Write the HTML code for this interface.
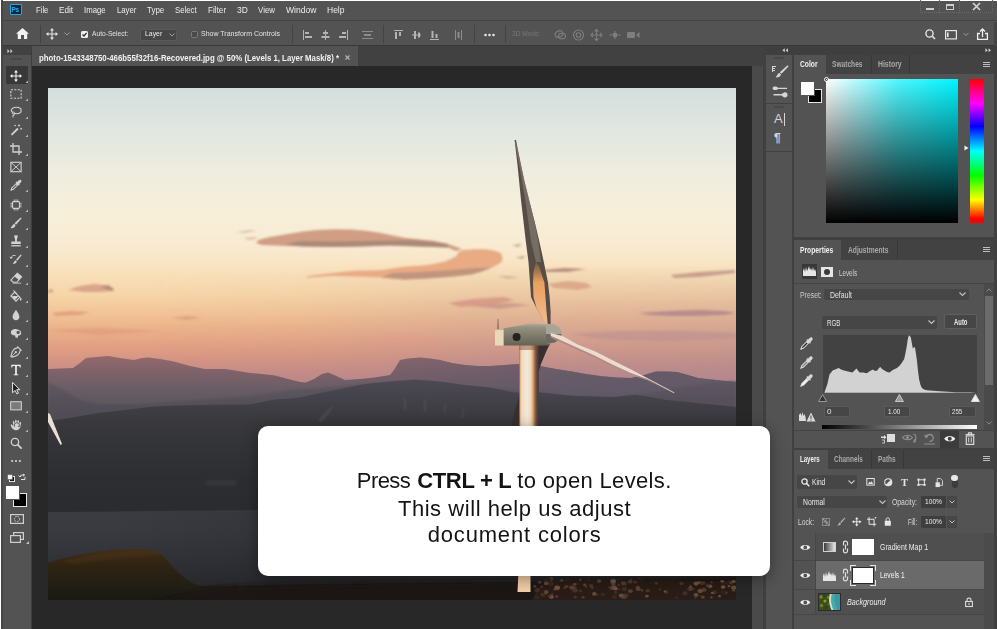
<!DOCTYPE html>
<html lang="en">
<head>
<meta charset="utf-8">
<title>Photoshop Levels tutorial</title>
<style>
*{box-sizing:border-box;margin:0;padding:0}
html,body{width:997px;height:629px;overflow:hidden;background:#535353}
body{position:relative;font-family:"Liberation Sans",sans-serif;font-size:9px;color:#ececec;line-height:1}
.a{position:absolute}
.t{position:absolute;white-space:nowrap;line-height:10px;height:10px;transform-origin:0 50%}
.dim{color:#7d7d7d}
.sep{position:absolute;width:1px;background:#444}
svg{position:absolute;overflow:visible}
.tp{font-size:22px;line-height:27px;color:#141414;white-space:nowrap}
</style>
</head>
<body>

<!-- ===== MENU BAR ===== -->
<div class="a" id="menubar" style="left:0;top:0;width:997px;height:21px;background:#535353;border-top:1px solid #fff;border-bottom:1px solid #444"></div>
<div class="a" style="left:10px;top:4px;width:12px;height:11px;background:#0a2a3e;border:1px solid #2fa3d6;border-radius:1px"></div>
<div class="t" style="left:11.500px;top:4.500px;font-size:6.500px;font-weight:bold;color:#31a8ff;letter-spacing:-.3px">Ps</div>
<div class="t" style="transform:scaleX(0.854);left:35.6px;top:5px">File</div>
<div class="t" style="transform:scaleX(0.909);left:58.9px;top:5px">Edit</div>
<div class="t" style="transform:scaleX(0.863);left:83.8px;top:5px">Image</div>
<div class="t" style="transform:scaleX(0.857);left:116.7px;top:5px">Layer</div>
<div class="t" style="transform:scaleX(0.886);left:147.2px;top:5px">Type</div>
<div class="t" style="transform:scaleX(0.863);left:175.4px;top:5px">Select</div>
<div class="t" style="transform:scaleX(0.905);left:207.9px;top:5px">Filter</div>
<div class="t" style="transform:scaleX(0.938);left:236.8px;top:5px">3D</div>
<div class="t" style="transform:scaleX(0.878);left:258.0px;top:5px">View</div>
<div class="t" style="transform:scaleX(0.950);left:285.5px;top:5px">Window</div>
<div class="t" style="transform:scaleX(0.945);left:326.7px;top:5px">Help</div>

<!-- ===== OPTIONS BAR ===== -->
<div class="a" id="optbar" style="left:2px;top:22px;width:992px;height:23px;background:#535353;border-radius:0 3px 3px 0"></div>
<div class="a" style="left:0;top:45px;width:997px;height:1px;background:#383838"></div>

<!-- ===== TAB BAR ===== -->
<div class="a" id="tabbar" style="left:0;top:46px;width:997px;height:20px;background:#414141"></div>
<div class="a" id="tab" style="left:32px;top:46px;width:326px;height:20px;background:#535353"></div>

<!-- ===== CANVAS ===== -->
<div class="a" id="canvas" style="left:32px;top:66px;width:720px;height:563px;background:#282828"></div>
<div class="a" id="vscroll" style="left:752px;top:66px;width:11px;height:563px;background:#4a4a4a"></div>

<!-- ===== LEFT TOOLBAR ===== -->
<div class="a" id="toolbar" style="left:0;top:46px;width:32px;height:583px;background:#535353;border-left:3px solid #464646;border-right:1px solid #3e3e3e"></div>
<div class="a" style="left:2px;top:46px;width:29px;height:9px;background:#424242"></div>

<div class="a" style="left:0;top:0;width:3px;height:629px;background:#464646;border-left:1px solid #fff"></div>
<div class="a" style="left:994px;top:22px;width:3px;height:24px;background:#454545"></div>
<!-- ===== RIGHT DOCK ===== -->
<div class="a" id="dock" style="left:763px;top:46px;width:234px;height:583px;background:#404040"></div>

<!-- ===== OPTIONS BAR CONTENT ===== -->
<svg style="left:16px;top:28px" width="13" height="11" viewBox="0 0 13 11"><path d="M6.500 0 L13 5.800 L11.200 5.800 L11.200 11 L8 11 L8 7 L5 7 L5 11 L1.800 11 L1.800 5.800 L0 5.800Z" fill="#f2f2f2"/></svg>
<div class="sep" style="left:40px;top:25px;height:18px;background:#434343"></div>
<svg style="left:46px;top:28px" width="12" height="12" viewBox="0 0 14 14"><path d="M7 0 L9.300 2.800 L7.600 2.800 L7.600 6.400 L11.200 6.400 L11.200 4.700 L14 7 L11.200 9.300 L11.200 7.600 L7.600 7.600 L7.600 11.200 L9.300 11.200 L7 14 L4.700 11.200 L6.400 11.200 L6.400 7.600 L2.800 7.600 L2.800 9.300 L0 7 L2.800 4.700 L2.800 6.400 L6.400 6.400 L6.400 2.800 L4.700 2.800Z" fill="#e8e8e8"/></svg>
<svg style="left:64px;top:32px" width="6" height="4" viewBox="0 0 6 4"><path d="M0.500 0.500 L3 3 L5.500 0.500" stroke="#9a9a9a" fill="none" stroke-width="1"/></svg>
<div class="a" style="left:81px;top:31px;width:7px;height:7px;background:#efefef;border-radius:1.500px"></div>
<svg style="left:81px;top:31px" width="7" height="7" viewBox="0 0 7 7"><path d="M1.500 3.500 L3 5 L5.600 1.800" stroke="#2a2a2a" fill="none" stroke-width="1.300"/></svg>
<div class="t" style="transform:scaleX(0.831);left:91.8px;top:29px;font-size:8px;color:#e2e2e2">Auto-Select:</div>
<div class="a" style="left:140px;top:29px;width:37px;height:12px;background:#464646;border:1px solid #5a5a5a;border-radius:2px"></div>
<div class="t" style="transform:scaleX(0.859);left:145.3px;top:29px;font-size:8px;color:#ececec">Layer</div>
<svg style="left:169px;top:33px" width="6" height="4" viewBox="0 0 6 4"><path d="M0.500 0.500 L3 3 L5.500 0.500" stroke="#9a9a9a" fill="none" stroke-width="1"/></svg>
<div class="a" style="left:191px;top:31px;width:7px;height:7px;border:1px solid #7a7a7a;border-radius:1.500px;background:#4a4a4a"></div>
<div class="t" style="transform:scaleX(0.875);left:201.0px;top:29px;font-size:8px;color:#e2e2e2">Show Transform Controls</div>
<div class="sep" style="left:292px;top:25px;height:18px;background:#434343"></div>
<!-- align icons -->
<svg style="left:300px;top:29px" width="200" height="12" viewBox="300 29 200 12">
 <g fill="#b4b4b4">
  <rect x="303" y="30" width="1" height="10"/><rect x="305" y="32" width="4" height="2"/><rect x="305" y="36" width="7" height="2"/>
  <rect x="325" y="30" width="1" height="10"/><rect x="323" y="32" width="5" height="2"/><rect x="321.500" y="36" width="8" height="2"/>
  <rect x="347" y="30" width="1" height="10"/><rect x="342" y="32" width="4" height="2"/><rect x="339" y="36" width="7" height="2"/>
  <rect x="394" y="30" width="9" height="1"/><rect x="395" y="32" width="2" height="7"/><rect x="399" y="32" width="2" height="4"/>
  <rect x="412" y="34.500" width="9" height="1"/><rect x="414" y="31" width="2" height="8"/><rect x="418" y="32.500" width="2" height="5"/>
  <rect x="430" y="39" width="9" height="1"/><rect x="431.500" y="31" width="2" height="7"/><rect x="435.500" y="34" width="2" height="4"/>
 </g>
 <g fill="#8c8c8c">
  <rect x="362" y="31" width="11" height="1"/><rect x="362" y="38" width="11" height="1"/><rect x="364" y="34" width="7" height="2"/>
  <rect x="455" y="30" width="1" height="10"/><rect x="461" y="30" width="1" height="10"/><rect x="457.500" y="32" width="2" height="6"/>
 </g>
 <g fill="#e4e4e4"><circle cx="485.500" cy="35" r="1.300"/><circle cx="489.500" cy="35" r="1.300"/><circle cx="493.500" cy="35" r="1.300"/></g>
</svg>
<div class="sep" style="left:383px;top:25px;height:18px;background:#434343"></div>
<div class="sep" style="left:474px;top:25px;height:18px;background:#434343"></div>
<div class="sep" style="left:505px;top:25px;height:18px;background:#434343"></div>
<div class="t" style="transform:scaleX(0.822);left:512.0px;top:29px;font-size:8px;color:#767676">3D Mode:</div>
<!-- 3d icons (dim) -->
<svg style="left:552px;top:28px" width="92" height="14" viewBox="552 28 92 14">
 <g fill="none" stroke="#7e7e7e" stroke-width="1.100">
  <ellipse cx="559" cy="34" rx="4" ry="3" transform="rotate(-25 559 34)"/><ellipse cx="562" cy="36" rx="3.500" ry="2.800"/>
  <circle cx="578.500" cy="35" r="5"/><circle cx="578.500" cy="35" r="2.300"/>
  <path d="M596.500 29.500V40.500M591 35H602"/><path d="M594.500 31.500L596.500 29.500L598.500 31.500M594.500 38.500L596.500 40.500L598.500 38.500M593 33L591 35L593 37M600 33L602 35L600 37"/>
  <path d="M609.500 35H620.500M615 31V39"/><rect x="613.500" y="33.500" width="3" height="3" fill="#7e7e7e"/>
 </g>
 <g fill="#7e7e7e"><rect x="627" y="32" width="8" height="6" rx="1"/><path d="M636 35 L639.500 32 L639.500 38Z"/></g>
</svg>
<!-- right icons -->
<svg style="left:924px;top:28px" width="70" height="14" viewBox="924 28 70 14">
 <circle cx="929.500" cy="33.500" r="3.600" fill="none" stroke="#e6e6e6" stroke-width="1.400"/><path d="M932.300 36.300 L935 39" stroke="#e6e6e6" stroke-width="1.600"/>
 <rect x="945.600" y="30.600" width="10.800" height="8.300" fill="none" stroke="#e6e6e6" stroke-width="1.200"/><rect x="947" y="32.500" width="1.600" height="4.500" fill="#e6e6e6"/>
 <path d="M963.500 33 L966 35.500 L968.500 33" fill="none" stroke="#9a9a9a" stroke-width="1"/>
 <path d="M980 33.500 L977.600 33.500 L977.600 39.400 L987.400 39.400 L987.400 33.500 L985 33.500" fill="none" stroke="#f0f0f0" stroke-width="1.300"/><path d="M982.500 37 L982.500 29.500 M980 31.500 L982.500 29 L985 31.500" fill="none" stroke="#f0f0f0" stroke-width="1.300"/>
</svg>
<!-- window controls -->
<div class="a" style="left:920px;top:0;width:73px;height:13px;border:1px dotted #6a6a6a;border-top:none"></div>
<div class="a" style="left:939px;top:0;width:1px;height:13px;border-left:1px dotted #6a6a6a"></div>
<div class="a" style="left:959px;top:0;width:1px;height:13px;border-left:1px dotted #6a6a6a"></div>
<div class="a" style="left:926px;top:8px;width:8px;height:2px;background:#cfcfcf"></div>
<div class="a" style="left:946px;top:4px;width:8px;height:6px;border:1px solid #cfcfcf;border-top-width:2px"></div>
<svg style="left:972px;top:2px" width="9" height="9" viewBox="0 0 9 9"><path d="M1 1 L8 8 M8 1 L1 8" stroke="#d6d6d6" stroke-width="1.600"/></svg>
<!-- doc tab -->
<div class="t" style="transform:scaleX(0.918);left:38.5px;top:53px;font-size:8.500px;font-weight:bold;color:#f2f2f2">photo-1543348750-466b55f32f16-Recovered.jpg @ 50% (Levels 1, Layer Mask/8) *</div>
<svg style="left:345px;top:55px" width="5" height="5" viewBox="0 0 5 5"><path d="M0.500 0.500 L4.500 4.500 M4.500 0.500 L0.500 4.500" stroke="#b4b4b4" stroke-width="1.100"/></svg>

<!-- ===== TOOLS ===== -->
<svg style="left:6.500px;top:48.500px" width="6" height="4.300" viewBox="0 0 7 5"><path d="M0.500 0 L0.500 5 L3 2.500Z M4 0 L4 5 L6.500 2.500Z" fill="#cfcfcf"/></svg>
<div class="a" style="left:11px;top:58px;width:11px;height:2px;background:#484848"></div>
<div class="a" style="left:6px;top:66px;width:22px;height:18px;background:#383838;border-radius:1px"></div>
<svg style="left:10px;top:69.5px" width="12" height="12" viewBox="0 0 14 14"><path d="M7 0 L9.300 2.800 L7.600 2.800 L7.600 6.400 L11.200 6.400 L11.200 4.700 L14 7 L11.200 9.300 L11.200 7.600 L7.600 7.600 L7.600 11.200 L9.300 11.200 L7 14 L4.700 11.200 L6.400 11.200 L6.400 7.600 L2.800 7.600 L2.800 9.300 L0 7 L2.800 4.700 L2.800 6.400 L6.400 6.400 L6.400 2.800 L4.700 2.800Z" fill="#f4f4f4"/></svg>
<svg style="left:25px;top:79.5px" width="3" height="3" viewBox="0 0 3 3"><path d="M3 0.500 L3 3 L0.500 3Z" fill="#b8b8b8"/></svg>
<svg style="left:10px;top:87.5px" width="12" height="12" viewBox="0 0 14 14"><rect x="1" y="2" width="12" height="10" fill="none" stroke="#d2d2d2" stroke-width="1.300" stroke-dasharray="2.400 1.600"/></svg>
<svg style="left:25px;top:97.5px" width="3" height="3" viewBox="0 0 3 3"><path d="M3 0.500 L3 3 L0.500 3Z" fill="#b8b8b8"/></svg>
<svg style="left:10px;top:106px" width="12" height="12" viewBox="0 0 14 14"><path d="M7.500 1.500 C11 1.500 13 3.200 13 5.200 C13 7.500 10.500 9 7.500 9 C6.500 9 5.500 8.800 4.800 8.500 M3.200 7.600 C2 6.800 1.500 6 1.500 5.200 C1.500 3.200 4 1.500 7.500 1.500" fill="none" stroke="#d2d2d2" stroke-width="1.300"/><path d="M4.500 8 C5.500 9 5 10.500 3.800 11 C3 11.300 3 12.500 4 13.300" fill="none" stroke="#d2d2d2" stroke-width="1.200"/><circle cx="4" cy="8.200" r="1.300" fill="none" stroke="#d2d2d2" stroke-width="1"/></svg>
<svg style="left:25px;top:116px" width="3" height="3" viewBox="0 0 3 3"><path d="M3 0.500 L3 3 L0.500 3Z" fill="#b8b8b8"/></svg>
<svg style="left:10px;top:124px" width="12" height="12" viewBox="0 0 14 14"><path d="M1 12 L8.500 4.500 L10 6 L2.500 13.500Z" fill="#d2d2d2"/><path d="M10.500 0.500 L10.500 3 M9.200 1.800 L11.800 1.800 M13 4.500 L13 6.500 M12 5.500 L14 5.500 M6 1 L6 2.600 M5.200 1.800 L6.800 1.800" stroke="#d2d2d2" stroke-width="1"/></svg>
<svg style="left:25px;top:134px" width="3" height="3" viewBox="0 0 3 3"><path d="M3 0.500 L3 3 L0.500 3Z" fill="#b8b8b8"/></svg>
<svg style="left:10px;top:142.5px" width="12" height="12" viewBox="0 0 14 14"><path d="M3.500 0 L3.500 10.500 L14 10.500 M0 3.500 L10.500 3.500 L10.500 14" fill="none" stroke="#d2d2d2" stroke-width="1.500"/></svg>
<svg style="left:25px;top:152.5px" width="3" height="3" viewBox="0 0 3 3"><path d="M3 0.500 L3 3 L0.500 3Z" fill="#b8b8b8"/></svg>
<svg style="left:10px;top:161px" width="12" height="12" viewBox="0 0 14 14"><rect x="1" y="1.500" width="12" height="11" fill="none" stroke="#d2d2d2" stroke-width="1.300"/><path d="M1 1.500 L13 12.500 M13 1.500 L1 12.500" stroke="#d2d2d2" stroke-width="1.100"/></svg>
<svg style="left:10px;top:179px" width="12" height="12" viewBox="0 0 14 14"><path d="M12.700 1.300 C13.600 2.200 13.400 3.300 12.500 4.200 L10.800 5.900 L11.500 6.600 L10.400 7.700 L9.700 7 L4 12.700 L2.200 13.200 L1.200 14 L0.300 13.100 L1 12.100 L1.500 10.300 L7.200 4.600 L6.500 3.900 L7.600 2.800 L8.300 3.500 L10 1.800 C10.900 0.900 11.800 0.400 12.700 1.300Z" fill="#d2d2d2"/><path d="M2.600 10.800 L7 6.400 L7.800 7.200 L3.400 11.600 L2.400 11.800Z" fill="#535353"/></svg>
<svg style="left:25px;top:189px" width="3" height="3" viewBox="0 0 3 3"><path d="M3 0.500 L3 3 L0.500 3Z" fill="#b8b8b8"/></svg>
<svg style="left:10px;top:198.5px" width="12" height="12" viewBox="0 0 14 14"><rect x="3" y="3" width="8" height="8" rx="1" fill="none" stroke="#d2d2d2" stroke-width="1.300"/><path d="M5 0.500V3M7 0.500V3M9 0.500V3M5 11V13.500M7 11V13.500M9 11V13.500M0.500 5H3M0.500 7H3M0.500 9H3M11 5H13.500M11 7H13.500M11 9H13.500" stroke="#d2d2d2" stroke-width="1"/></svg>
<svg style="left:25px;top:208.5px" width="3" height="3" viewBox="0 0 3 3"><path d="M3 0.500 L3 3 L0.500 3Z" fill="#b8b8b8"/></svg>
<svg style="left:10px;top:216.5px" width="12" height="12" viewBox="0 0 14 14"><path d="M12.500 0.500 L13.600 1.600 L7 9 L5.300 7.400Z" fill="#d2d2d2"/><path d="M4.800 8 L6.400 9.600 C6 12 3.500 13.500 0.500 13 C2.500 11.800 2.500 9 4.800 8Z" fill="#d2d2d2"/></svg>
<svg style="left:25px;top:226.5px" width="3" height="3" viewBox="0 0 3 3"><path d="M3 0.500 L3 3 L0.500 3Z" fill="#b8b8b8"/></svg>
<svg style="left:10px;top:235px" width="12" height="12" viewBox="0 0 14 14"><path d="M5 1 C5 0 9 0 9 1 C9.500 2.500 8 4 8 6 L8 7.500 L12.500 7.500 L12.500 10.500 L1.500 10.500 L1.500 7.500 L6 7.500 L6 6 C6 4 4.500 2.500 5 1Z" fill="#d2d2d2"/><rect x="1.500" y="11.800" width="11" height="1.500" fill="#d2d2d2"/></svg>
<svg style="left:25px;top:245px" width="3" height="3" viewBox="0 0 3 3"><path d="M3 0.500 L3 3 L0.500 3Z" fill="#b8b8b8"/></svg>
<svg style="left:10px;top:253.5px" width="12" height="12" viewBox="0 0 14 14"><path d="M12.500 0.500 L13.600 1.600 L8.500 8 L7 6.600Z" fill="#d2d2d2"/><path d="M6.500 7.200 L8 8.700 C7.500 10.800 5.500 12 3 11.600 C4.600 10.600 4.600 8 6.500 7.200Z" fill="#d2d2d2"/><path d="M1 5 C1.500 2.500 4 1 6.500 1.800 M1 5 L0 3.200 M1 5 L3 4.200" fill="none" stroke="#d2d2d2" stroke-width="1.100"/></svg>
<svg style="left:25px;top:263.5px" width="3" height="3" viewBox="0 0 3 3"><path d="M3 0.500 L3 3 L0.500 3Z" fill="#b8b8b8"/></svg>
<svg style="left:10px;top:271.5px" width="12" height="12" viewBox="0 0 14 14"><path d="M8.500 1.500 L13.500 5.500 L8 12 L4 12 L1 9.500Z" fill="none" stroke="#d2d2d2" stroke-width="1.300"/><path d="M8.500 1.500 L13.500 5.500 L10.300 9.200 L5.300 5.200Z" fill="#d2d2d2"/><path d="M3 13 L13 13" stroke="#d2d2d2" stroke-width="1"/></svg>
<svg style="left:25px;top:281.5px" width="3" height="3" viewBox="0 0 3 3"><path d="M3 0.500 L3 3 L0.500 3Z" fill="#b8b8b8"/></svg>
<svg style="left:10px;top:290px" width="12" height="12" viewBox="0 0 14 14"><path d="M5.500 2.500 L11.500 8.500 L7 13 L1 7Z" fill="none" stroke="#d2d2d2" stroke-width="1.300"/><path d="M2.500 7 L9.800 7 L7 10.800 L5 11Z" fill="#d2d2d2"/><path d="M4 0.500 L8 4.500" stroke="#d2d2d2" stroke-width="1.200"/><path d="M12.500 8.500 C13.500 10 14 11 13.200 12 C12.500 12.800 11.300 12.200 11.500 11 C11.600 10.200 12 9.500 12.500 8.500Z" fill="#d2d2d2"/></svg>
<svg style="left:25px;top:300px" width="3" height="3" viewBox="0 0 3 3"><path d="M3 0.500 L3 3 L0.500 3Z" fill="#b8b8b8"/></svg>
<svg style="left:10px;top:308.5px" width="12" height="12" viewBox="0 0 14 14"><path d="M7 1 C8.500 4 11 6.500 11 9.200 C11 11.500 9.200 13 7 13 C4.800 13 3 11.500 3 9.200 C3 6.500 5.500 4 7 1Z" fill="#d2d2d2"/></svg>
<svg style="left:25px;top:318.5px" width="3" height="3" viewBox="0 0 3 3"><path d="M3 0.500 L3 3 L0.500 3Z" fill="#b8b8b8"/></svg>
<svg style="left:10px;top:326.5px" width="12" height="12" viewBox="0 0 14 14"><path d="M1 6.500 C1 3.500 4 2 7.500 2.500 C11 3 13.500 5 13 7.500 C12.700 9.300 11 10 9.500 9.800 L9 12.500 L6.500 12.500 L6 10 C3 10 1 9 1 6.500Z" fill="#d2d2d2"/><circle cx="9.500" cy="6.300" r="1.900" fill="#535353"/></svg>
<svg style="left:25px;top:336.5px" width="3" height="3" viewBox="0 0 3 3"><path d="M3 0.500 L3 3 L0.500 3Z" fill="#b8b8b8"/></svg>
<svg style="left:10px;top:345.5px" width="12" height="12" viewBox="0 0 14 14"><path d="M9 1 L13 5 L11.500 6 C11.500 9 9 11.500 2 13 L1 12 C2.500 5 5 2.500 8 2.500Z" fill="none" stroke="#d2d2d2" stroke-width="1.300"/><circle cx="6.800" cy="7.200" r="1.300" fill="#d2d2d2"/><path d="M1.500 12.500 L6 8" stroke="#d2d2d2" stroke-width="1"/></svg>
<svg style="left:25px;top:355.5px" width="3" height="3" viewBox="0 0 3 3"><path d="M3 0.500 L3 3 L0.500 3Z" fill="#b8b8b8"/></svg>
<svg style="left:10px;top:363.5px" width="12" height="12" viewBox="0 0 14 14"><path d="M1.500 1 L12.500 1 L12.500 4 L11.500 4 C11.300 2.800 10.800 2.300 9.500 2.300 L8 2.300 L8 11.300 C8 12 8.500 12.200 9.800 12.200 L9.800 13 L4.200 13 L4.200 12.200 C5.500 12.200 6 12 6 11.300 L6 2.300 L4.500 2.300 C3.200 2.300 2.700 2.800 2.500 4 L1.500 4Z" fill="#efefef"/></svg>
<svg style="left:25px;top:373.5px" width="3" height="3" viewBox="0 0 3 3"><path d="M3 0.500 L3 3 L0.500 3Z" fill="#b8b8b8"/></svg>
<svg style="left:10px;top:382px" width="12" height="12" viewBox="0 0 14 14"><path d="M3 0.500 L11.500 9 L7.800 9 L9.800 13 L8 13.800 L6 9.800 L3 12.500Z" fill="#1e1e1e" stroke="#f0f0f0" stroke-width="1.100"/></svg>
<svg style="left:25px;top:392px" width="3" height="3" viewBox="0 0 3 3"><path d="M3 0.500 L3 3 L0.500 3Z" fill="#b8b8b8"/></svg>
<svg style="left:10px;top:400px" width="12" height="12" viewBox="0 0 14 14"><rect x="0.800" y="2" width="12.400" height="9.500" fill="#7a7a7a" stroke="#d2d2d2" stroke-width="1.200"/></svg>
<svg style="left:25px;top:410px" width="3" height="3" viewBox="0 0 3 3"><path d="M3 0.500 L3 3 L0.500 3Z" fill="#b8b8b8"/></svg>
<svg style="left:10px;top:418.5px" width="12" height="12" viewBox="0 0 14 14"><path d="M3 7.500 C2 6 0.800 5.800 0.800 7 C0.800 8.500 3 12.500 6 13 C9.500 13.500 12 11.500 12.200 8.500 C12.400 6.500 13.500 4 12.500 3.500 C11.500 3 11 5 10.500 6 C10.500 4 10.800 1.500 9.600 1.300 C8.500 1.200 8.600 4 8.200 5.500 C8 3.500 8 0.800 6.800 0.800 C5.600 0.800 6 4 5.800 5.800 C5.200 4.200 4.800 2 3.800 2.300 C2.700 2.600 3.800 6 4 8Z" fill="#d2d2d2"/><path d="M5.500 9 A3 3 0 1 1 10.500 9" fill="none" stroke="#535353" stroke-width="1.100"/><path d="M10.800 9.600 L10.800 7.600 L9 8.800Z" fill="#535353"/></svg>
<svg style="left:25px;top:428.5px" width="3" height="3" viewBox="0 0 3 3"><path d="M3 0.500 L3 3 L0.500 3Z" fill="#b8b8b8"/></svg>
<svg style="left:10px;top:437px" width="12" height="12" viewBox="0 0 14 14"><circle cx="5.800" cy="5.800" r="4.300" fill="none" stroke="#d2d2d2" stroke-width="1.500"/><path d="M9 9 L13 13" stroke="#d2d2d2" stroke-width="2" stroke-linecap="round"/></svg>
<svg style="left:10px;top:455px" width="12" height="12" viewBox="0 0 14 14"><circle cx="2.500" cy="7" r="1.300" fill="#d2d2d2"/><circle cx="7" cy="7" r="1.300" fill="#d2d2d2"/><circle cx="11.500" cy="7" r="1.300" fill="#d2d2d2"/></svg>
<svg style="left:7px;top:474px" width="8" height="8" viewBox="0 0 8 8"><rect x="2.500" y="2.500" width="5" height="5" fill="#111" stroke="#e0e0e0" stroke-width="1"/><rect x="0.500" y="0.500" width="5" height="5" fill="#f0f0f0" stroke="#535353" stroke-width=".6"/></svg>
<svg style="left:18px;top:474px" width="9" height="8" viewBox="0 0 9 8"><path d="M2 3 C2 1.500 3 1 5 1 L6.500 1 M2 3 L0.500 1.500 M2 3 L3.500 1.500 M6.500 1 L5 0 M6.500 1 L5 2.300" stroke="#e0e0e0" fill="none" stroke-width="1"/><path d="M3 5.500 L7 5.500 L7 3" stroke="#e0e0e0" fill="none" stroke-width="1"/></svg>
<div class="a" style="left:13px;top:493px;width:14px;height:14px;background:#000;border:1px solid #e6e6e6"></div>
<div class="a" style="left:5px;top:485px;width:15px;height:15px;background:#fff;border:1px solid #535353"></div>
<svg style="left:10px;top:514px" width="14" height="10" viewBox="0 0 14 10"><rect x="0.600" y="0.600" width="12.800" height="8.800" fill="none" stroke="#cfcfcf" stroke-width="1.200"/><circle cx="7" cy="5" r="2.600" fill="none" stroke="#cfcfcf" stroke-width="1" stroke-dasharray="1.500 1"/></svg>
<svg style="left:10px;top:532px" width="14" height="11" viewBox="0 0 14 11"><rect x="3.600" y="0.600" width="9.800" height="6.800" fill="none" stroke="#cfcfcf" stroke-width="1.200"/><rect x="0.600" y="3.600" width="9.800" height="6.800" fill="#535353" stroke="#cfcfcf" stroke-width="1.200"/></svg>
<svg style="left:26px;top:541px" width="3" height="3" viewBox="0 0 3 3"><path d="M3 0 L3 3 L0 3Z" fill="#c4c4c4"/></svg>

<!-- ===== PHOTO ===== -->
<svg id="photo" class="a" style="left:48px;top:88px;overflow:hidden" width="688" height="512" viewBox="48 88 688 512">
<defs>
  <linearGradient id="sky" x1="0" y1="88" x2="0" y2="388" gradientUnits="userSpaceOnUse">
    <stop offset="0" stop-color="#d4dedd"/>
    <stop offset=".14" stop-color="#e1e7e1"/>
    <stop offset=".29" stop-color="#efede0"/>
    <stop offset=".43" stop-color="#f7efd9"/>
    <stop offset=".54" stop-color="#f8ead0"/>
    <stop offset=".62" stop-color="#f8e0ba"/>
    <stop offset=".69" stop-color="#f6d5a8"/>
    <stop offset=".75" stop-color="#f2c497"/>
    <stop offset=".80" stop-color="#ecb38b"/>
    <stop offset=".85" stop-color="#e4a384"/>
    <stop offset=".90" stop-color="#d79683"/>
    <stop offset=".95" stop-color="#c68c86"/>
    <stop offset="1" stop-color="#b88488"/>
  </linearGradient>
  <linearGradient id="pinkR" x1="0" y1="265" x2="0" y2="395" gradientUnits="userSpaceOnUse">
    <stop offset="0" stop-color="#cda598" stop-opacity="0"/>
    <stop offset=".27" stop-color="#cda598" stop-opacity=".6"/>
    <stop offset=".5" stop-color="#c79e96" stop-opacity="1"/>
    <stop offset=".77" stop-color="#b08a90"/>
    <stop offset="1" stop-color="#a8848e"/>
  </linearGradient>
  <linearGradient id="pinkMask" x1="150" y1="0" x2="736" y2="0" gradientUnits="userSpaceOnUse">
    <stop offset="0" stop-color="#000"/>
    <stop offset=".25" stop-color="#1c1c1c"/>
    <stop offset=".56" stop-color="#737373"/>
    <stop offset="1" stop-color="#a0a0a0"/>
  </linearGradient>
  <mask id="mPink" maskUnits="userSpaceOnUse" x="48" y="88" width="688" height="512"><rect x="48" y="88" width="688" height="512" fill="url(#pinkMask)"/></mask>
  <linearGradient id="far" x1="0" y1="355" x2="0" y2="408" gradientUnits="userSpaceOnUse">
    <stop offset="0" stop-color="#946a6e"/>
    <stop offset=".3" stop-color="#80626a"/>
    <stop offset=".65" stop-color="#695d65"/>
    <stop offset="1" stop-color="#59565c"/>
  </linearGradient>
  <linearGradient id="farTint" x1="300" y1="0" x2="600" y2="0" gradientUnits="userSpaceOnUse">
    <stop offset="0" stop-color="#5f5868" stop-opacity="0"/>
    <stop offset="1" stop-color="#5f5868" stop-opacity=".75"/>
  </linearGradient>
  <linearGradient id="mid" x1="0" y1="380" x2="0" y2="420" gradientUnits="userSpaceOnUse">
    <stop offset="0" stop-color="#5e5661"/>
    <stop offset="1" stop-color="#4c4a52"/>
  </linearGradient>
  <linearGradient id="dark" x1="0" y1="380" x2="0" y2="520" gradientUnits="userSpaceOnUse">
    <stop offset="0" stop-color="#4c4952"/>
    <stop offset=".15" stop-color="#424148"/>
    <stop offset=".3" stop-color="#38383d"/>
    <stop offset=".5" stop-color="#323337"/>
    <stop offset=".7" stop-color="#2d2e32"/>
    <stop offset="1" stop-color="#2a2b2e"/>
  </linearGradient>
  <linearGradient id="lake" x1="0" y1="509" x2="0" y2="590" gradientUnits="userSpaceOnUse">
    <stop offset="0" stop-color="#34363a"/>
    <stop offset=".06" stop-color="#3b3d43"/>
    <stop offset=".3" stop-color="#383a40"/>
    <stop offset=".65" stop-color="#303237"/>
    <stop offset="1" stop-color="#27282b"/>
  </linearGradient>
  <linearGradient id="fg" x1="0" y1="548" x2="0" y2="600" gradientUnits="userSpaceOnUse">
    <stop offset="0" stop-color="#402c16"/>
    <stop offset=".35" stop-color="#2e2312"/>
    <stop offset=".7" stop-color="#221f14"/>
    <stop offset="1" stop-color="#191813"/>
  </linearGradient>
  <linearGradient id="tower" x1="519.500" y1="0" x2="539" y2="0" gradientUnits="userSpaceOnUse">
    <stop offset="0" stop-color="#dca070"/>
    <stop offset=".12" stop-color="#f0dcc2"/>
    <stop offset=".4" stop-color="#f4e8d8"/>
    <stop offset=".58" stop-color="#f0d9bc"/>
    <stop offset=".7" stop-color="#dca06c"/>
    <stop offset=".8" stop-color="#8e6248"/>
    <stop offset=".9" stop-color="#58423a"/>
    <stop offset="1" stop-color="#483a36"/>
  </linearGradient>
  <linearGradient id="bladeLit" x1="0" y1="264" x2="0" y2="324" gradientUnits="userSpaceOnUse">
    <stop offset="0" stop-color="#d48c54" stop-opacity=".3"/>
    <stop offset=".3" stop-color="#e8a060"/>
    <stop offset=".7" stop-color="#efb07a"/>
    <stop offset="1" stop-color="#f0bc8c"/>
  </linearGradient>
  <linearGradient id="nac" x1="0" y1="323" x2="0" y2="346" gradientUnits="userSpaceOnUse">
    <stop offset="0" stop-color="#b4af9e"/>
    <stop offset=".2" stop-color="#94907f"/>
    <stop offset=".6" stop-color="#7c7869"/>
    <stop offset="1" stop-color="#646055"/>
  </linearGradient>
  <linearGradient id="lakeR" x1="100" y1="0" x2="330" y2="0" gradientUnits="userSpaceOnUse"><stop offset="0" stop-color="#202124" stop-opacity="0"/><stop offset="1" stop-color="#202124" stop-opacity=".3"/></linearGradient>
  <filter id="b05"><feGaussianBlur stdDeviation=".5"/></filter>
  <filter id="b1"><feGaussianBlur stdDeviation="1"/></filter>
  <filter id="b2"><feGaussianBlur stdDeviation="2"/></filter>
  <filter id="b3"><feGaussianBlur stdDeviation="3.5"/></filter>
  <filter id="b6"><feGaussianBlur stdDeviation="7"/></filter>
</defs>

<rect x="48" y="88" width="688" height="512" fill="url(#sky)"/>
<rect x="48" y="88" width="688" height="320" fill="url(#pinkR)" mask="url(#mPink)"/>

<!-- clouds -->
<g filter="url(#b1)">
  <path d="M256 243 L259 239.700 270 237 288 234 303 231.500 317 230 335 229.300 352 229.500 368 231 381 233 393 235.500 404.500 237.700 420 239.500 433.600 241 448 244 462 249 456 251 448 247.600 434 247 419 246.400 404 246 390 245.500 375 246 361 246.400 346 247 332 247 317 246.800 303 246.400 288 246 273.600 245.500 262 245Z" fill="#d09e84"/>
  <path d="M300 241 L332 241.500 361 241 390 240.500 410 240 433.600 241.500 448 244 448 247.600 419 246.400 390 245.500 361 246.400 332 247 303 246.400 285 244.500Z" fill="#ab8978"/>
  <path d="M244 238 L254 237 258 239 248 240Z M236 232 L250 230 256 231 244 233Z" fill="#d8b096" opacity=".7"/>
  <path d="M500.500 252.800 L494 250.500 486 249.300 474 249.300 462.700 250 458 252.500 456.900 255.700 451 259 445.200 261.500 436 263.500 427.800 265 416 266 404.500 266.800 392 268.600 381.300 270.300 368 270.600 355 270.800 343 272 331.800 273.200 320 274.600 308.500 276 305.600 277.800 318 277 331.800 276 346 276.300 360.900 276.700 381.300 277.500 393 278.700 404.500 279.600 416 279.200 427.800 278.400 440 277.600 451 276.700 461 275.800 471.400 274.600 482 271.500 491.800 267.400 498 264.500 502 261.500 502.500 257Z" fill="#e8ab84"/>
  <path d="M392 273 L420 272 451 270 474 268 491.800 267.400 482 271.500 471.400 274.600 451 276.700 427.800 278.400 404.500 279.600 381.300 277.500Z" fill="#bf957e"/>
  <path d="M498 276 L512 276.500 518 278 506 278.500Z" fill="#c9a58e" opacity=".8"/>
  <path d="M68 290 L80 286 94 284 104 285 112 288 114 291 100 292 84 292Z" fill="#dba58a"/>
  <path d="M100 287 L108 285 114 289 112 291Z" fill="#b58d7c"/>
  <path d="M52 313 L70 311 90 312 80 315 56 316Z" fill="#e0a380"/>
  <path d="M170 318 L188 316 202 318 186 320Z" fill="#e0a380"/>
  <path d="M48 290 L52 289 54 292 48 293Z" fill="#d7a48c"/>
</g>
<g filter="url(#b1)">
  <path d="M544 270 L564 268 586 269 568 272 546 272Z" fill="#b8917e"/>
  <path d="M548 284 L568 281 586 283 592 287 578 290 554 288Z" fill="#dba98d"/>
  <path d="M512 245 L522 244 518 247Z" fill="#c7a48c"/>
  <path d="M516 257 L526 256 522 259Z" fill="#c7a48c"/>
  <path d="M671 275 L700 272 735 270 735 273 700 277 674 278Z" fill="#c7a08c"/>
  <path d="M639 313 L670 311 700 310 724 311 736 313 724 315 700 316 670 316 650 315Z" fill="#b88c8e"/>
  <path d="M448 303 L474 299 504 297 514 300 494 305 460 307Z" fill="#d99c88"/>
  <path d="M470 306 L510 303 530 305 500 309Z" fill="#c48f86" opacity=".7"/>
  <path d="M570 334 L620 331 690 331 736 333 736 339 660 341 600 339Z" fill="#b48a90" opacity=".45"/>
  <path d="M360 338 L400 336 450 338 420 342 380 342Z" fill="#e49a8a" opacity=".55"/>
  <path d="M48 330 L100 328 160 331 100 335Z" fill="#dc9478" opacity=".5"/>
</g>

<!-- far mountains -->
<path d="M48 369 L73 368 L80 363 L86 358 L96 357 L108 356 L120 358 L134 360 L142 358 L149 357.5 L160 359 L174 361.5 L190 366 L205 369 L225 369 L238 371 L250 373 L262 374 L275 375.5 L288 379 L300 382 L306 382.5 L314 379 L322 374 L328 372.5 L334 375 L345 380 L360 379 L375 377.5 L390 375 L394 370 L400 360 L408 358.5 L420 357.5 L430 358.5 L440 360 L452 363 L465 365 L478 366 L490 366 L505 365 L518 364 L530 365 L540 366 L556 369 L572 371.5 L586 374 L600 376 L616 377.5 L631 378 L644 375 L656 371.5 L667 371.5 L677 372 L688 375 L698 378 L716 380 L736 382 L736 440 L48 440Z" fill="url(#far)"/>
<path d="M48 369 L73 368 L80 363 L86 358 L96 357 L108 356 L120 358 L134 360 L142 358 L149 357.5 L160 359 L174 361.5 L190 366 L205 369 L225 369 L238 371 L250 373 L262 374 L275 375.5 L288 379 L300 382 L306 382.5 L314 379 L322 374 L328 372.5 L334 375 L345 380 L360 379 L375 377.5 L390 375 L394 370 L400 360 L408 358.5 L420 357.5 L430 358.5 L440 360 L452 363 L465 365 L478 366 L490 366 L505 365 L518 364 L530 365 L540 366 L556 369 L572 371.5 L586 374 L600 376 L616 377.5 L631 378 L644 375 L656 371.5 L667 371.5 L677 372 L688 375 L698 378 L716 380 L736 382 L736 440 L48 440Z" fill="url(#farTint)"/>
<!-- mid haze layer -->
<path d="M48 383 L60 388 L70 394 L81 400 L100 404 L140 404 L200 400 L250 396 L290 390 L320 388 L360 384 L400 382 L540 392 L572 396 L614 397 L635 395 L650 393 L667 390 L690 386 L710 383 L736 381 L736 440 L48 440Z" fill="url(#mid)" opacity=".8" filter="url(#b1)"/>
<!-- dark ridge -->
<path d="M48 421 L70 418 L98 413 L125 410 L149 407 L175 405.5 L200 405 L225 404.5 L250 404.5 L262 402 L275 399.5 L290 398.5 L300 397.5 L315 394 L340 389 L365 384 L390 381.5 L415 379.6 L440 381.4 L465 385 L490 387.6 L515 392.5 L540 392.6 L572 395.8 L595 396.5 L614 397 L635 394.8 L650 397 L667 400 L698 403 L736 407 L736 520 L48 520Z" fill="url(#dark)"/>

<!-- pale streaks on dark hills -->
<g fill="#5b5a60" opacity=".5" filter="url(#b1)">
  <path d="M318 420 L330 408 334 406 322 422Z"/>
  <path d="M404 398 l2 0 0 12 -2 0z M424 400 l2 0 0 12 -2 0z M444 404 l1.5 0 0 10 -1.5 0z M462 408 l1.500 0 0 10 -1.500 0z"/>
  <rect x="206" y="480" width="30" height="6" opacity=".4"/>
</g>
<!-- small left turbine blade -->
<path d="M48 413 L50 414 62 444 60.500 445 48 422Z" fill="#e8ded4"/>
<!-- lake -->
<path d="M48 512 L110 511.500 190 510.500 280 510 736 509 736 600 48 600Z" fill="url(#lake)"/>
<rect x="48" y="512" width="688" height="80" fill="url(#lakeR)"/>
<!-- foreground hill -->
<path d="M48 562.7 L60 559 L74.5 556 L86 553.5 L98.8 551.7 L110 550.3 L120.8 549.5 L136 549.3 L151.7 550 L158 552.5 L162.7 556 L168 561.5 L173.8 568 L181 575 L189 581.5 L196 584.5 L202.5 586 L260 585 L330 584 L430 583 L520 582 L620 580 L736 577 L736 600 L48 600Z" fill="url(#fg)"/>
<path d="M60 561 L96 553 130 550 150 550 164 554 150 556 110 559 76 564Z" fill="#54371a" opacity=".35" filter="url(#b1)"/>
<path d="M150 604 L185 596 205 589 228 586 348 583 548 581 736 579 736 604Z" fill="#1a1915" opacity=".9" filter="url(#b2)"/>
<!-- foreground rocks right lit -->
<g filter="url(#b05)">
<path d="M532 600 L536 592 542 585 552 580 566 581 580 578 600 579 630 581 670 580 710 582 736 580 736 600Z" fill="#2a1f19"/>
<g opacity=".5" filter="url(#b05)"><ellipse cx="599.1" cy="581.0" rx="2.2" ry="1.7" fill="#8a6248"/><ellipse cx="699.1" cy="582.6" rx="2.1" ry="1.6" fill="#a07858"/><ellipse cx="541.5" cy="586.7" rx="1.2" ry="0.9" fill="#8a6248"/><ellipse cx="647.7" cy="590.6" rx="2.1" ry="1.6" fill="#6b4a36"/><ellipse cx="730.2" cy="581.8" rx="2.6" ry="2.0" fill="#3a2a1e"/><ellipse cx="618.2" cy="588.8" rx="2.1" ry="1.6" fill="#4a3426"/><ellipse cx="554.7" cy="589.4" rx="1.4" ry="1.1" fill="#8a6248"/><ellipse cx="546.0" cy="582.1" rx="2.3" ry="1.8" fill="#5a4030"/><ellipse cx="690.2" cy="588.9" rx="2.7" ry="2.1" fill="#7a5640"/><ellipse cx="594.3" cy="593.9" rx="2.3" ry="1.8" fill="#a07858"/><ellipse cx="550.5" cy="584.0" rx="1.9" ry="1.5" fill="#7a5640"/><ellipse cx="731.0" cy="583.0" rx="1.8" ry="1.4" fill="#7a5640"/><ellipse cx="564.5" cy="587.8" rx="1.1" ry="0.9" fill="#8a6248"/><ellipse cx="710.0" cy="586.3" rx="2.3" ry="1.8" fill="#b08a68"/><ellipse cx="702.8" cy="597.1" rx="1.9" ry="1.5" fill="#8a6248"/><ellipse cx="546.2" cy="592.0" rx="2.2" ry="1.7" fill="#b08a68"/><ellipse cx="591.2" cy="585.7" rx="2.3" ry="1.7" fill="#6b4a36"/><ellipse cx="723.1" cy="587.0" rx="2.2" ry="1.7" fill="#b08a68"/><ellipse cx="545.8" cy="593.4" rx="1.3" ry="1.0" fill="#a07858"/><ellipse cx="614.0" cy="596.3" rx="1.9" ry="1.5" fill="#4a3426"/><ellipse cx="624.3" cy="589.0" rx="2.6" ry="2.0" fill="#5a4030"/><ellipse cx="707.7" cy="585.7" rx="1.8" ry="1.4" fill="#7a5640"/><ellipse cx="580.4" cy="579.7" rx="1.3" ry="1.0" fill="#a07858"/><ellipse cx="536.4" cy="594.6" rx="1.4" ry="1.1" fill="#3a2a1e"/><ellipse cx="534.8" cy="586.4" rx="1.7" ry="1.3" fill="#7a5640"/><ellipse cx="725.6" cy="592.7" rx="2.0" ry="1.5" fill="#6b4a36"/><ellipse cx="625.8" cy="595.4" rx="2.8" ry="2.1" fill="#5a4030"/><ellipse cx="614.0" cy="585.9" rx="1.9" ry="1.5" fill="#5a4030"/><ellipse cx="546.5" cy="579.3" rx="1.4" ry="1.1" fill="#4a3426"/><ellipse cx="556.1" cy="590.0" rx="1.2" ry="0.9" fill="#4a3426"/><ellipse cx="641.9" cy="590.3" rx="1.2" ry="0.9" fill="#a07858"/><ellipse cx="584.7" cy="584.9" rx="1.7" ry="1.3" fill="#8a6248"/><ellipse cx="557.2" cy="587.8" rx="2.8" ry="2.2" fill="#b08a68"/><ellipse cx="631.3" cy="579.7" rx="1.2" ry="0.9" fill="#7a5640"/><ellipse cx="575.2" cy="597.0" rx="1.7" ry="1.3" fill="#6b4a36"/><ellipse cx="703.9" cy="589.8" rx="2.7" ry="2.1" fill="#7a5640"/><ellipse cx="690.6" cy="586.6" rx="1.4" ry="1.1" fill="#a07858"/><ellipse cx="696.0" cy="594.9" rx="2.4" ry="1.8" fill="#a07858"/><ellipse cx="574.2" cy="587.9" rx="2.4" ry="1.8" fill="#6b4a36"/><ellipse cx="692.8" cy="589.0" rx="1.4" ry="1.1" fill="#7a5640"/><ellipse cx="623.9" cy="596.7" rx="2.8" ry="2.2" fill="#7a5640"/><ellipse cx="550.2" cy="580.0" rx="1.9" ry="1.5" fill="#7a5640"/><ellipse cx="575.1" cy="590.5" rx="2.7" ry="2.1" fill="#6b4a36"/><ellipse cx="630.4" cy="591.1" rx="2.5" ry="1.9" fill="#8a6248"/><ellipse cx="701.8" cy="583.0" rx="1.7" ry="1.3" fill="#a07858"/><ellipse cx="630.1" cy="581.6" rx="2.5" ry="1.9" fill="#7a5640"/><ellipse cx="551.4" cy="596.9" rx="2.4" ry="1.8" fill="#b08a68"/><ellipse cx="614.7" cy="596.9" rx="2.4" ry="1.8" fill="#4a3426"/><ellipse cx="733.6" cy="581.5" rx="2.1" ry="1.6" fill="#b08a68"/><ellipse cx="696.1" cy="583.5" rx="2.5" ry="2.0" fill="#b08a68"/><ellipse cx="536.9" cy="597.4" rx="2.2" ry="1.7" fill="#4a3426"/><ellipse cx="621.2" cy="595.4" rx="2.5" ry="2.0" fill="#a07858"/><ellipse cx="539.6" cy="582.3" rx="2.0" ry="1.5" fill="#7a5640"/><ellipse cx="586.1" cy="586.4" rx="1.3" ry="1.0" fill="#7a5640"/><ellipse cx="714.4" cy="592.3" rx="2.5" ry="1.9" fill="#5a4030"/><ellipse cx="700.3" cy="595.9" rx="1.3" ry="1.0" fill="#4a3426"/><ellipse cx="639.2" cy="578.4" rx="1.8" ry="1.4" fill="#4a3426"/><ellipse cx="656.3" cy="583.5" rx="1.3" ry="1.0" fill="#8a6248"/><ellipse cx="638.2" cy="589.1" rx="2.5" ry="1.9" fill="#8a6248"/><ellipse cx="711.5" cy="582.0" rx="1.4" ry="1.1" fill="#6b4a36"/><ellipse cx="646.9" cy="596.2" rx="1.8" ry="1.4" fill="#a07858"/><ellipse cx="723.2" cy="592.9" rx="2.6" ry="2.0" fill="#3a2a1e"/><ellipse cx="719.5" cy="596.2" rx="1.4" ry="1.1" fill="#b08a68"/><ellipse cx="561.6" cy="580.4" rx="1.8" ry="1.4" fill="#8a6248"/><ellipse cx="576.8" cy="584.1" rx="1.3" ry="1.0" fill="#4a3426"/><ellipse cx="722.8" cy="591.9" rx="1.7" ry="1.3" fill="#3a2a1e"/><ellipse cx="711.4" cy="597.4" rx="1.4" ry="1.1" fill="#8a6248"/><ellipse cx="614.0" cy="587.7" rx="2.8" ry="2.2" fill="#a07858"/><ellipse cx="566.5" cy="586.6" rx="2.0" ry="1.5" fill="#7a5640"/><ellipse cx="618.7" cy="585.1" rx="1.2" ry="0.9" fill="#7a5640"/><ellipse cx="537.9" cy="589.1" rx="1.8" ry="1.4" fill="#6b4a36"/><ellipse cx="611.3" cy="588.3" rx="1.6" ry="1.2" fill="#8a6248"/><ellipse cx="556.7" cy="596.4" rx="1.5" ry="1.1" fill="#8a6248"/><ellipse cx="550.9" cy="583.4" rx="2.7" ry="2.1" fill="#4a3426"/><ellipse cx="588.4" cy="580.6" rx="1.8" ry="1.4" fill="#3a2a1e"/><ellipse cx="615.6" cy="588.7" rx="2.0" ry="1.5" fill="#b08a68"/><ellipse cx="545.6" cy="591.8" rx="1.8" ry="1.4" fill="#8a6248"/><ellipse cx="588.1" cy="578.3" rx="1.2" ry="0.9" fill="#3a2a1e"/><ellipse cx="550.8" cy="595.1" rx="1.2" ry="0.9" fill="#8a6248"/><ellipse cx="625.2" cy="584.8" rx="2.0" ry="1.6" fill="#3a2a1e"/><ellipse cx="676.6" cy="597.5" rx="1.5" ry="1.2" fill="#4a3426"/><ellipse cx="574.6" cy="584.2" rx="1.6" ry="1.2" fill="#a07858"/><ellipse cx="592.3" cy="588.0" rx="1.4" ry="1.0" fill="#7a5640"/><ellipse cx="695.5" cy="597.9" rx="1.1" ry="0.9" fill="#6b4a36"/><ellipse cx="572.1" cy="587.5" rx="2.7" ry="2.1" fill="#8a6248"/><ellipse cx="666.3" cy="592.2" rx="2.0" ry="1.6" fill="#5a4030"/><ellipse cx="729.0" cy="586.2" rx="1.4" ry="1.1" fill="#a07858"/><ellipse cx="602.9" cy="594.6" rx="2.3" ry="1.8" fill="#4a3426"/><ellipse cx="615.3" cy="585.0" rx="1.1" ry="0.9" fill="#4a3426"/><ellipse cx="536.9" cy="590.5" rx="2.6" ry="2.0" fill="#5a4030"/><ellipse cx="566.8" cy="579.7" rx="2.6" ry="2.0" fill="#3a2a1e"/><ellipse cx="654.4" cy="581.8" rx="1.4" ry="1.1" fill="#3a2a1e"/><ellipse cx="623.6" cy="583.3" rx="2.8" ry="2.1" fill="#7a5640"/><ellipse cx="583.1" cy="597.3" rx="1.6" ry="1.2" fill="#7a5640"/><ellipse cx="570.8" cy="584.7" rx="1.2" ry="0.9" fill="#3a2a1e"/><ellipse cx="635.1" cy="582.0" rx="2.0" ry="1.5" fill="#6b4a36"/><ellipse cx="552.3" cy="594.3" rx="1.3" ry="1.0" fill="#6b4a36"/><ellipse cx="613.2" cy="584.0" rx="2.2" ry="1.7" fill="#8a6248"/><ellipse cx="684.9" cy="593.2" rx="2.6" ry="2.0" fill="#5a4030"/><ellipse cx="687.6" cy="589.4" rx="1.6" ry="1.2" fill="#4a3426"/><ellipse cx="542.8" cy="594.7" rx="2.7" ry="2.0" fill="#5a4030"/><ellipse cx="681.5" cy="583.4" rx="2.0" ry="1.5" fill="#6b4a36"/><ellipse cx="700.1" cy="590.9" rx="2.7" ry="2.0" fill="#a07858"/><ellipse cx="551.1" cy="578.8" rx="2.2" ry="1.7" fill="#8a6248"/><ellipse cx="609.7" cy="587.0" rx="1.1" ry="0.9" fill="#6b4a36"/><ellipse cx="659.9" cy="589.3" rx="1.0" ry="0.8" fill="#8a6248"/><ellipse cx="641.6" cy="579.3" rx="2.4" ry="1.8" fill="#3a2a1e"/><ellipse cx="696.7" cy="595.4" rx="1.5" ry="1.1" fill="#a07858"/><ellipse cx="580.4" cy="591.0" rx="1.9" ry="1.4" fill="#5a4030"/><ellipse cx="549.4" cy="596.2" rx="1.6" ry="1.2" fill="#6b4a36"/><ellipse cx="658.0" cy="582.3" rx="1.3" ry="1.0" fill="#3a2a1e"/><ellipse cx="665.0" cy="591.6" rx="1.3" ry="1.0" fill="#b08a68"/><ellipse cx="546.2" cy="583.4" rx="2.3" ry="1.7" fill="#a07858"/><ellipse cx="637.8" cy="587.3" rx="1.9" ry="1.5" fill="#8a6248"/><ellipse cx="733.7" cy="590.3" rx="1.6" ry="1.2" fill="#8a6248"/><ellipse cx="722.2" cy="581.3" rx="1.9" ry="1.4" fill="#b08a68"/><ellipse cx="733.8" cy="587.6" rx="2.7" ry="2.1" fill="#a07858"/><ellipse cx="549.0" cy="579.8" rx="2.4" ry="1.8" fill="#3a2a1e"/><ellipse cx="725.5" cy="583.3" rx="2.5" ry="1.9" fill="#3a2a1e"/><ellipse cx="712.3" cy="593.0" rx="1.5" ry="1.1" fill="#b08a68"/><ellipse cx="613.2" cy="581.2" rx="2.8" ry="2.1" fill="#b08a68"/><ellipse cx="615.5" cy="592.5" rx="1.8" ry="1.4" fill="#5a4030"/><ellipse cx="597.5" cy="594.8" rx="1.0" ry="0.8" fill="#7a5640"/><ellipse cx="702.7" cy="583.0" rx="2.7" ry="2.1" fill="#6b4a36"/></g>
</g>

<!-- turbine -->
<path d="M539 343 L550 343.5 L546 352 L541 364 L538.5 372 L538.5 394 L519.6 394 L515 410 L511 426 L519.6 426 L519.6 344Z" fill="#3a2f30"/>
<rect x="519.500" y="344" width="19" height="90" fill="url(#tower)"/>
<rect x="519.500" y="344" width="19" height="6" fill="#7a4a2c" opacity=".45"/>
<path d="M518.500 570 L530.500 570 530.500 592 517.500 592Z" fill="#f3cfa6"/>
<!-- nacelle -->
<path d="M503.500 328.500 L530 323.500 549 324.500 550 345.500 503.500 345.500Z" fill="url(#nac)"/>
<path d="M495 330.300 L503.500 330 503.500 345.600 495 345.600Z" fill="#e8d9ba"/>
<circle cx="516.600" cy="337" r="4" fill="#24231f"/>
<path d="M497.500 319 L498.500 319 499 329 497 329Z" fill="#8a8074"/>
<!-- hub -->
<path d="M546 323.500 L553 324 559 327 562 332 561 338 556 342 549 343.500 546 343Z" fill="#a8a496"/>
<path d="M546 334 L561.500 334 560 339 555 342.500 549 343.500 546 343Z" fill="#6e6a60"/>
<!-- blade up -->
<path d="M514.6 140 L516 140 L519.5 158 L524 180 L529 200 L534.5 221 L539.3 241.3 L543.8 262 L548 282.6 L549.6 297 L550.6 311.6 L550.6 324 L548.6 324 L542.4 317.8 L536.2 307.4 L531 297 L530 282.6 L528.5 262 L525.8 241.3 L521 200 L517.5 165Z" fill="#574d45"/>
<path d="M515 143 L516 142 L520 160 L525 183 L530 203 L535 224 L538.5 243 L541 262 L536 262 L531 241 L526 205 L521 175Z" fill="#7d746a" opacity=".8" filter="url(#b05)"/>
<path d="M536 262 L539 266 L541.5 274 L544.4 282.6 L545.5 297 L546.4 310 L547.5 322 L546.5 324 L542.4 317.8 L536.5 308 L533.5 297 L533 282.6 L533.5 272Z" fill="url(#bladeLit)" filter="url(#b05)"/>
<!-- blade right -->
<path d="M550.7 333 L562.3 336 L577.7 344.5 L595.3 351.5 L613 360.4 L630.6 369.2 L650 379.5 L674.4 392.6 L674.2 393.2 L648 379.6 L630.6 373 L613 365 L595.3 356 L577.7 348 L560 340 L550.7 336Z" fill="#eedbd0"/>
<path d="M550.7 336 L560 340 L577.7 348 L595.3 356 L613 365 L630.6 373 L648 379.6 L674.2 393.2 L648 380.6 L630.6 374.6 L613 366.8 L595.3 358 L577.7 350 L560 342 L550.7 337.5Z" fill="#b08e86"/>
</svg>

<!-- ===== RIGHT DOCK: icon strip ===== -->
<div class="a" style="left:765px;top:46px;width:232px;height:9px;background:#3f3f3f"></div>
<svg style="left:782px;top:48px" width="6.400" height="4.500" viewBox="0 0 8 5"><path d="M3.500 0 L3.500 5 L0.500 2.500Z M7.500 0 L7.500 5 L4.500 2.500Z" fill="#cfcfcf"/></svg>
<svg style="left:985px;top:48px" width="6.400" height="4.500" viewBox="0 0 8 5"><path d="M0.500 0 L0.500 5 L3.500 2.500Z M4.500 0 L4.500 5 L7.500 2.500Z" fill="#cfcfcf"/></svg>
<div class="a" style="left:766px;top:55px;width:26px;height:48px;background:#535353"></div>
<div class="a" style="left:766px;top:104px;width:26px;height:47px;background:#535353"></div>
<div class="a" style="left:766px;top:152px;width:26px;height:477px;background:#535353"></div>
<div class="a" style="left:774px;top:57px;width:10px;height:2px;background:#484848"></div>
<div class="a" style="left:774px;top:106px;width:10px;height:2px;background:#484848"></div>
<!-- brush settings icon -->
<svg style="left:771px;top:64px" width="18" height="15" viewBox="0 0 18 15">
  <path d="M1 2.500h4M1 4.500h3M1 6.500h3M1.500 2v6" stroke="#d6d6d6" stroke-width="1" fill="none"/>
  <path d="M16.500 1.200 L17.600 2.300 L10.500 9.800 L8.800 8.300Z" fill="#d6d6d6"/>
  <path d="M8.300 8.800 L10 10.400 C9.500 12.500 7 13.800 4.500 13.300 C6.200 12.300 6.300 9.700 8.300 8.800Z" fill="#d6d6d6"/>
</svg>
<!-- brushes icon -->
<svg style="left:772px;top:85px" width="16" height="14" viewBox="0 0 16 14">
  <path d="M0.500 3.200 C0.500 1.800 2 1.400 3.500 1.500 C5 1.600 5.500 2.500 6 2.700 L15 2.700 L15 3.900 L6 3.900 C5.500 4.100 5 5 3.500 5 C2 5 0.500 4.500 0.500 3.200Z" fill="#d6d6d6"/>
  <path d="M15.500 9.800 C15.500 7.500 13.500 7 12 7.500 C10.800 7.900 10.300 8.800 9.700 9.100 L1.500 9.100 L1.500 10.400 L9.700 10.400 C10.300 10.700 10.800 12 12.500 12.500 C14 12.900 15.500 12 15.500 9.800Z" fill="#d6d6d6"/>
</svg>
<!-- character A| -->
<div class="t" style="left:774px;top:112px;font-size:13px;line-height:14px;height:14px;color:#d6d6d6">A</div>
<div class="a" style="left:784px;top:113px;width:1px;height:13px;background:#d6d6d6"></div>
<!-- paragraph -->
<div class="t" style="left:774px;top:131px;font-size:12px;line-height:14px;height:14px;color:#d6d6d6;font-weight:bold">¶</div>

<!-- ===== COLOR PANEL ===== -->
<div class="a" style="left:794px;top:55px;width:200px;height:182px;background:#535353"></div>
<div class="a" style="left:794px;top:55px;width:200px;height:19px;background:#424242"></div>
<div class="a" style="left:794px;top:55px;width:32px;height:19px;background:#535353"></div>
<div class="sep" style="left:871px;top:55px;height:19px;background:#383838"></div>
<div class="sep" style="left:909px;top:55px;height:19px;background:#383838"></div>
<div class="t" style="transform:scaleX(0.788);left:800.4px;top:59px;font-weight:bold;color:#f0f0f0;font-size:8.500px">Color</div>
<div class="t" style="transform:scaleX(0.778);left:831.9px;top:59px;font-weight:bold;color:#a9a9a9;font-size:8.500px">Swatches</div>
<div class="t" style="transform:scaleX(0.806);left:877.7px;top:59px;font-weight:bold;color:#a9a9a9;font-size:8.500px">History</div>
<div class="a" style="left:983px;top:62px;width:7px;height:1px;background:#bdbdbd;box-shadow:0 2px 0 #bdbdbd,0 4px 0 #bdbdbd"></div>
<!-- fg/bg swatches -->
<div class="a" style="left:808px;top:89px;width:14px;height:14px;background:#000;border:1px solid #e6e6e6"></div>
<div class="a" style="left:800px;top:81px;width:15px;height:15px;background:#fff;border:1px solid #535353"></div>
<!-- color field -->
<div class="a" style="left:826px;top:79px;width:132px;height:144px;background:linear-gradient(to bottom,rgba(0,0,0,0),#000),linear-gradient(to right,#fff 0%,#4cf8ff 55%,#00f5ff 100%)"></div>
<div class="a" style="left:823.500px;top:76.500px;width:5px;height:5px;border:1px solid #fff;border-radius:50%;box-shadow:0 0 0 .7px #333 inset"></div>
<!-- hue strip -->
<div class="a" style="left:970px;top:79px;width:14px;height:144px;background:linear-gradient(to bottom,#f00 0%,#f0f 17%,#00f 33%,#0ff 50%,#0f0 67%,#ff0 84%,#f00 97%,#f00 100%)"></div>
<svg style="left:963.500px;top:144.500px" width="5" height="6" viewBox="0 0 6 7"><path d="M0.500 0.500 L5.500 3.500 L0.500 6.500Z" fill="#f2f2f2"/></svg>

<!-- ===== PROPERTIES PANEL ===== -->
<div class="a" style="left:794px;top:240px;width:200px;height:208px;background:#535353"></div>
<div class="a" style="left:794px;top:240px;width:200px;height:20px;background:#424242"></div>
<div class="a" style="left:794px;top:240px;width:47px;height:20px;background:#535353"></div>
<div class="sep" style="left:897px;top:240px;height:20px;background:#383838"></div>
<div class="t" style="transform:scaleX(0.790);left:800.4px;top:245px;font-weight:bold;color:#f0f0f0;font-size:8.500px">Properties</div>
<div class="t" style="transform:scaleX(0.787);left:848.1px;top:245px;font-weight:bold;color:#a9a9a9;font-size:8.500px">Adjustments</div>
<div class="a" style="left:983px;top:247px;width:7px;height:1px;background:#bdbdbd;box-shadow:0 2px 0 #bdbdbd,0 4px 0 #bdbdbd"></div>
<!-- icon row -->
<div class="a" style="left:802px;top:264px;width:15px;height:15px;background:#383838"></div>
<svg style="left:803px;top:266px" width="13" height="10" viewBox="0 0 13 10"><path d="M0 10 L0 5 L1 2 L2 6 L3 1 L4 5 L5 3 L6 0 L7 4 L8 2 L9 5 L10 1 L11 5 L12 3 L13 6 L13 10Z" fill="#e6e6e6"/></svg>
<div class="a" style="left:821px;top:267px;width:12px;height:10px;background:#e6e6e6"></div>
<div class="a" style="left:824px;top:269px;width:6px;height:6px;background:#3a3a3a;border-radius:50%"></div>
<div class="t" style="transform:scaleX(0.736);left:838.8px;top:268px;font-size:8.500px;color:#d0d0d0">Levels</div>
<div class="a" style="left:794px;top:283px;width:200px;height:1px;background:#444"></div>
<!-- preset -->
<div class="t" style="transform:scaleX(0.809);left:800.4px;top:290px;font-size:8.500px;color:#c8c8c8">Preset:</div>
<div class="a" style="left:824px;top:289px;width:145px;height:11px;background:#464646;border-radius:2px"></div>
<div class="t" style="transform:scaleX(0.813);left:830.0px;top:290px;font-size:8.500px;color:#e4e4e4">Default</div>
<svg style="left:959px;top:292px" width="7" height="5" viewBox="0 0 7 5"><path d="M0.500 0.500 L3.500 3.500 L6.500 0.500" stroke="#c0c0c0" fill="none" stroke-width="1.200"/></svg>
<!-- scrollbar -->
<div class="a" style="left:984px;top:284px;width:10px;height:146px;background:#4a4a4a"></div>
<div class="a" style="left:985px;top:296px;width:8px;height:89px;background:#6b6b6b"></div>
<svg style="left:986px;top:288px" width="6" height="4" viewBox="0 0 6 4"><path d="M0.500 3.500 L3 0.800 L5.500 3.500" stroke="#8a8a8a" fill="none" stroke-width="1"/></svg>
<svg style="left:986px;top:421px" width="6" height="4" viewBox="0 0 6 4"><path d="M0.500 0.500 L3 3.200 L5.500 0.500" stroke="#8a8a8a" fill="none" stroke-width="1"/></svg>
<!-- channel + auto -->
<div class="a" style="left:822px;top:316px;width:115px;height:13px;background:#464646;border-radius:2px"></div>
<div class="t" style="transform:scaleX(0.733);left:827.0px;top:318px;font-size:8.500px;color:#e4e4e4">RGB</div>
<svg style="left:928px;top:320px" width="7" height="5" viewBox="0 0 7 5"><path d="M0.500 0.500 L3.500 3.500 L6.500 0.500" stroke="#c0c0c0" fill="none" stroke-width="1.200"/></svg>
<div class="a" style="left:944px;top:314px;width:33px;height:15px;background:#464646;border:1px solid #5e5e5e;border-radius:2px"></div>
<div class="t" style="transform:scaleX(0.697);left:954px;top:317px;font-size:8.500px;color:#ececec;font-weight:bold">Auto</div>
<!-- eyedroppers -->
<svg style="left:800px;top:337px" width="13" height="13" viewBox="0 0 13 13"><path id="eyd" d="M12.200 0.800 C13 1.600 12.800 2.600 12 3.400 L10.300 5.100 L10.900 5.700 L9.900 6.700 L9.300 6.100 L3.600 11.800 L1.800 12.300 L0.800 13 L0 12.200 L0.700 11.200 L1.200 9.400 L6.900 3.700 L6.300 3.100 L7.300 2.100 L7.900 2.700 L9.600 1 C10.400 0.200 11.400 0 12.200 0.800Z" fill="#d8d8d8"/><path d="M2.200 9.900 L6.600 5.500 L7.500 6.400 L3.100 10.800 L1.900 11.100Z" fill="#222"/></svg>
<svg style="left:800px;top:356px" width="13" height="13" viewBox="0 0 13 13"><use href="#eyd"/><path d="M2.200 9.900 L6.600 5.500 L7.500 6.400 L3.100 10.800 L1.900 11.100Z" fill="#808080"/></svg>
<svg style="left:800px;top:374px" width="13" height="13" viewBox="0 0 13 13"><use href="#eyd"/><path d="M2.200 9.900 L6.600 5.500 L7.500 6.400 L3.100 10.800 L1.900 11.100Z" fill="#fff"/></svg>
<!-- histogram -->
<div class="a" style="left:823px;top:335px;width:154px;height:58px;background:#424242"></div>
<svg style="left:0;top:0" width="997" height="629" viewBox="0 0 997 629"><path d="M824.300 392.700 L827.400 384 829.500 374.600 832.600 370.500 835 369.500 838.800 368 841 369.500 844 370.500 848 371.500 852.300 372.600 855 370 856.400 368.400 858 370.500 859.600 372.600 863 372.500 866.800 373.200 870 371 873 369.500 875 371 877.200 370.500 879 368 880.300 367 882 369 884.500 370.500 887 372 889.700 372.600 892 370.500 893.800 369.500 897 368 900 365.300 902 362.500 904.200 359 905.500 353 906.700 346.600 907.800 339 908.800 335.200 909.800 336 910.800 337.300 911.800 343 912.900 348.700 914 347 915 347.600 916 354 917 361 918 371 919.200 379.800 920.500 385 921.900 388 924 389.500 927 390.200 933 390.800 939.500 391.300 948 391.800 956 392.300 970.700 392.300 976 392.700Z" fill="#d2d2d2"/></svg>
<!-- sliders -->
<svg style="left:818px;top:394px" width="164" height="9" viewBox="818 394 164 9">
  <path d="M822.600 394.500 L826.600 401.500 L818.600 401.500Z" fill="#333" stroke="#9a9a9a" stroke-width="1"/>
  <path d="M899.400 394.500 L903.400 401.500 L895.400 401.500Z" fill="#9a9a9a" stroke="#c6c6c6" stroke-width="1"/>
  <path d="M975.400 394.500 L979.400 401.500 L971.400 401.500Z" fill="#f2f2f2" stroke="#dcdcdc" stroke-width="1"/>
</svg>
<!-- input boxes -->
<div class="a" style="left:824px;top:406px;width:26px;height:11px;background:#464646;border:1px solid #5a5a5a;border-radius:1px"></div>
<div class="t" style="left:827px;top:407px;font-size:8px;color:#e8e8e8">0</div>
<div class="a" style="left:884px;top:406px;width:26px;height:11px;background:#464646;border:1px solid #5a5a5a;border-radius:1px"></div>
<div class="t" style="transform:scaleX(0.796);left:887.6px;top:407px;font-size:8px;color:#e8e8e8">1.00</div>
<div class="a" style="left:949px;top:406px;width:27px;height:11px;background:#464646;border:1px solid #5a5a5a;border-radius:1px"></div>
<div class="t" style="transform:scaleX(0.771);left:952.0px;top:407px;font-size:8px;color:#e8e8e8">255</div>
<!-- clip warning icon -->
<svg style="left:799px;top:412px" width="17" height="10" viewBox="0 0 17 10"><path d="M0 9 L0 3 L1.500 1 L2.500 4 L3.500 0 L4.500 4 L5.500 2 L6.500 5 L7 9Z" fill="#dcdcdc"/><path d="M12 0.500 L16.500 9.500 L7.500 9.500Z" fill="#dcdcdc"/><rect x="11.500" y="3.500" width="1" height="3.500" fill="#444"/><rect x="11.500" y="7.700" width="1" height="1" fill="#444"/></svg>
<!-- output gradient -->
<div class="a" style="left:822px;top:425px;width:155px;height:4px;background:linear-gradient(to right,#000,#fff)"></div>
<!-- bottom toolbar -->
<div class="a" style="left:794px;top:430px;width:200px;height:1px;background:#444"></div>
<div class="a" style="left:940px;top:431px;width:19px;height:17px;background:#3c3c3c"></div>
<svg style="left:881px;top:433px" width="14" height="11" viewBox="0 0 14 11"><rect x="6" y="1" width="8" height="8" fill="#dedede"/><path d="M0 3.500 L3 3.500 L3 2 L5.500 4.300 L3 6.600 L3 5 L0 5Z" fill="#dedede"/><path d="M1 7 L3.500 7 L3.500 10 M1 10 L3.500 10" stroke="#dedede" fill="none" stroke-width=".8"/></svg>
<svg style="left:902px;top:433px" width="16" height="11" viewBox="0 0 16 11"><path d="M0.500 4.500 C2.500 1.500 8.500 1.500 10.500 4.500 C8.500 7.500 2.500 7.500 0.500 4.500Z" fill="none" stroke="#8e8e8e" stroke-width="1.200"/><circle cx="5.500" cy="4.500" r="1.600" fill="#8e8e8e"/><path d="M11.500 1 C14.500 2 15 6 12 8.500 L12.500 6.500 M12 8.500 L14 8.800" stroke="#8e8e8e" fill="none" stroke-width="1.200"/></svg>
<svg style="left:923px;top:432px" width="13" height="13" viewBox="0 0 13 13"><path d="M3 5 C4 2 8.500 1.500 10 4.500 C11 7 9.500 9.500 6.500 9.500" stroke="#8e8e8e" fill="none" stroke-width="1.300"/><path d="M0.800 3 L3.200 6.800 L5.600 3.600Z" fill="#8e8e8e"/><path d="M1 12 L12 12" stroke="#8e8e8e" stroke-width="1"/></svg>
<svg style="left:944px;top:435px" width="11.500" height="7.400" viewBox="0 0 14 9"><path id="eyeP" d="M0.300 4.500 C2.800 0.300 11.200 0.300 13.700 4.500 C11.200 8.700 2.800 8.700 0.300 4.500Z" fill="#f0f0f0"/><circle cx="7" cy="4.500" r="2.400" fill="#3c3c3c"/></svg>
<svg style="left:965px;top:432px" width="10" height="13" viewBox="0 0 10 13"><path d="M0.500 2.500 L9.500 2.500 M3.500 2.500 L3.500 0.800 L6.500 0.800 L6.500 2.500" stroke="#d8d8d8" fill="none" stroke-width="1.200"/><path d="M1.300 3.800 L8.700 3.800 L8.700 12.300 L1.300 12.300Z" fill="none" stroke="#d8d8d8" stroke-width="1.200"/><path d="M3.700 5.500 L3.700 10.500 M6.300 5.500 L6.300 10.500" stroke="#d8d8d8" stroke-width="1"/></svg>

<!-- ===== LAYERS PANEL ===== -->
<div class="a" style="left:794px;top:450px;width:200px;height:179px;background:#535353"></div>
<div class="a" style="left:794px;top:450px;width:200px;height:19px;background:#424242"></div>
<div class="a" style="left:794px;top:450px;width:34px;height:19px;background:#535353"></div>
<div class="sep" style="left:871px;top:450px;height:19px;background:#383838"></div>
<div class="sep" style="left:903px;top:450px;height:19px;background:#383838"></div>
<div class="t" style="transform:scaleX(0.718);left:800.4px;top:454px;font-weight:bold;color:#f0f0f0;font-size:8.500px">Layers</div>
<div class="t" style="transform:scaleX(0.755);left:834.2px;top:454px;font-weight:bold;color:#a9a9a9;font-size:8.500px">Channels</div>
<div class="t" style="transform:scaleX(0.764);left:878.2px;top:454px;font-weight:bold;color:#a9a9a9;font-size:8.500px">Paths</div>
<div class="a" style="left:983px;top:456px;width:7px;height:1px;background:#bdbdbd;box-shadow:0 2px 0 #bdbdbd,0 4px 0 #bdbdbd"></div>
<!-- filter row -->
<div class="a" style="left:797px;top:475px;width:60px;height:14px;background:#464646;border-radius:2px"></div>
<svg style="left:801px;top:478px" width="9" height="9" viewBox="0 0 9 9"><circle cx="3.500" cy="3.500" r="2.600" fill="none" stroke="#ececec" stroke-width="1.300"/><path d="M5.500 5.500 L8.300 8.300" stroke="#ececec" stroke-width="1.500"/></svg>
<div class="t" style="transform:scaleX(0.782);left:812.4px;top:477px;font-size:8.500px;color:#ececec">Kind</div>
<svg style="left:848px;top:480px" width="7" height="5" viewBox="0 0 7 5"><path d="M0.500 0.500 L3.500 3.500 L6.500 0.500" stroke="#c0c0c0" fill="none" stroke-width="1.200"/></svg>
<svg style="left:866px;top:478px" width="9" height="7.600" viewBox="0 0 10 9"><rect x="0.600" y="0.600" width="8.800" height="7.800" fill="none" stroke="#e4e4e4" stroke-width="1.200"/><path d="M2 7 L4 4 L5.200 5.600 L6.500 3.500 L8 7Z" fill="#e4e4e4"/></svg>
<svg style="left:883.500px;top:478px" width="8.500" height="8.500" viewBox="0 0 10 10"><circle cx="5" cy="5" r="4.200" fill="none" stroke="#e4e4e4" stroke-width="1.200"/><path d="M2 8 A4.200 4.200 0 0 0 8 2Z" fill="#e4e4e4"/></svg>
<div class="t" style="left:901px;top:477px;font-family:'Liberation Serif',serif;font-weight:bold;font-size:10.500px;line-height:11px;height:11px;color:#e4e4e4">T</div>
<svg style="left:917.400px;top:478px" width="9" height="8.500" viewBox="0 0 11 10"><rect x="2" y="2" width="7" height="6" fill="none" stroke="#e4e4e4" stroke-width="1.200"/><rect x="0.500" y="0.500" width="2.500" height="2.500" fill="#e4e4e4"/><rect x="8" y="0.500" width="2.500" height="2.500" fill="#e4e4e4"/><rect x="0.500" y="7" width="2.500" height="2.500" fill="#e4e4e4"/><rect x="8" y="7" width="2.500" height="2.500" fill="#e4e4e4"/></svg>
<svg style="left:935px;top:477.500px" width="8" height="9.500" viewBox="0 0 9 11"><path d="M2.500 0.500 L6 0.500 L8.500 3 L8.500 8.500 L2.500 8.500Z" fill="none" stroke="#e4e4e4" stroke-width="1"/><rect x="0.500" y="5" width="5" height="5.500" fill="#e4e4e4"/></svg>
<div class="a" style="left:952px;top:478px;width:5.500px;height:9.500px;background:#3c3c3c;border-radius:3px"></div>
<div class="a" style="left:951.400px;top:474.700px;width:6.600px;height:6.600px;background:#e8e8e8;border-radius:50%"></div>
<!-- blend row -->
<div class="a" style="left:797px;top:496px;width:90px;height:12px;background:#464646;border-radius:2px"></div>
<div class="t" style="transform:scaleX(0.795);left:802.5px;top:497px;font-size:8.500px;color:#ececec">Normal</div>
<svg style="left:879px;top:500px" width="7" height="5" viewBox="0 0 7 5"><path d="M0.500 0.500 L3.500 3.500 L6.500 0.500" stroke="#c0c0c0" fill="none" stroke-width="1.200"/></svg>
<div class="t" style="transform:scaleX(0.802);left:891.7px;top:497px;font-size:8.500px;color:#d8d8d8">Opacity:</div>
<div class="a" style="left:921px;top:496px;width:25px;height:12px;background:#3e3e3e"></div>
<div class="t" style="transform:scaleX(0.831);left:925px;top:497px;font-size:8px;color:#ececec">100%</div>
<div class="a" style="left:947px;top:496px;width:10px;height:12px;background:#474747"></div>
<svg style="left:949px;top:500px" width="6" height="4" viewBox="0 0 6 4"><path d="M0.500 0.500 L3 3 L5.500 0.500" stroke="#c0c0c0" fill="none" stroke-width="1"/></svg>
<!-- lock row -->
<div class="t" style="transform:scaleX(0.787);left:797.9px;top:517px;font-size:8.500px;color:#d8d8d8">Lock:</div>
<svg style="left:821.500px;top:517.500px" width="8" height="8" viewBox="0 0 9 9"><rect x="0.500" y="0.500" width="8" height="8" fill="none" stroke="#9a9a9a" stroke-width=".8"/><path d="M4.500 0.500V8.500M0.500 4.500H8.500" stroke="#9a9a9a" stroke-width=".8"/><rect x="0.500" y="0.500" width="2" height="2" fill="#9a9a9a"/><rect x="4.500" y="4.500" width="2" height="2" fill="#9a9a9a"/><rect x="2.500" y="2.500" width="2" height="2" fill="#9a9a9a"/><rect x="6.500" y="6.500" width="2" height="2" fill="#9a9a9a"/></svg>
<svg style="left:837px;top:517px" width="8.500" height="9.500" viewBox="0 0 10 11"><path d="M9 0.500 L9.800 1.300 L5 7 L3.800 5.900Z" fill="#b4b4b4"/><path d="M3.400 6.400 L4.600 7.500 C4.300 9.300 2.500 10.300 0.500 10 C1.800 9 1.800 7 3.400 6.400Z" fill="#b4b4b4"/></svg>
<svg style="left:852px;top:516.800px" width="9.500" height="9.500" viewBox="0 0 11 11"><path d="M5.500 0 L7.500 2.500 L6.100 2.500 L6.100 4.900 L8.500 4.900 L8.500 3.500 L11 5.500 L8.500 7.500 L8.500 6.100 L6.100 6.100 L6.100 8.500 L7.500 8.500 L5.500 11 L3.500 8.500 L4.900 8.500 L4.900 6.100 L2.500 6.100 L2.500 7.500 L0 5.500 L2.500 3.500 L2.500 4.900 L4.900 4.900 L4.900 2.500 L3.500 2.500Z" fill="#e6e6e6"/></svg>
<svg style="left:867.400px;top:516.800px" width="10" height="9.500" viewBox="0 0 12 11"><path d="M2.500 0 L2.500 8.500 L11 8.500 M0 2.500 L8.500 2.500 L8.500 11" stroke="#e6e6e6" fill="none" stroke-width="1.200"/><path d="M9 0.500 L11.500 0.500 M10.200 0 L10.200 2" stroke="#e6e6e6" stroke-width=".8"/></svg>
<svg style="left:884.200px;top:516.800px" width="7.600" height="9.200" viewBox="0 0 9 12"><path d="M2.300 5 L2.300 3.200 C2.300 0.400 6.700 0.400 6.700 3.200 L6.700 5" fill="none" stroke="#e6e6e6" stroke-width="1.300"/><rect x="0.500" y="5" width="8" height="6.500" rx=".8" fill="#e6e6e6"/></svg>
<div class="t" style="transform:scaleX(0.680);left:907.7px;top:517px;font-size:8.500px;color:#d8d8d8">Fill:</div>
<div class="a" style="left:921px;top:516px;width:25px;height:12px;background:#3e3e3e"></div>
<div class="t" style="transform:scaleX(0.831);left:925px;top:517px;font-size:8px;color:#ececec">100%</div>
<div class="a" style="left:947px;top:516px;width:10px;height:12px;background:#474747"></div>
<svg style="left:949px;top:520px" width="6" height="4" viewBox="0 0 6 4"><path d="M0.500 0.500 L3 3 L5.500 0.500" stroke="#c0c0c0" fill="none" stroke-width="1"/></svg>
<!-- layer rows -->
<div class="a" style="left:984px;top:533px;width:10px;height:96px;background:#4b4b4b"></div>
<div class="a" style="left:794px;top:533px;width:190px;height:82px;background:#4f4f4f"></div>
<div class="a" style="left:794px;top:533px;width:21px;height:82px;background:#535353"></div>
<div class="a" style="left:815px;top:561px;width:169px;height:28px;background:#6a6a6a"></div>
<div class="a" style="left:794px;top:560px;width:190px;height:1px;background:#474747"></div>
<div class="a" style="left:794px;top:589px;width:190px;height:1px;background:#474747"></div>
<div class="a" style="left:794px;top:614px;width:190px;height:1px;background:#474747"></div>
<div class="a" style="left:815px;top:533px;width:1px;height:81px;background:#474747"></div>
<svg style="left:800px;top:544px" width="10.500" height="6.750" viewBox="0 0 14 9"><use href="#eyeP"/><circle cx="7" cy="4.500" r="2.500" fill="#535353"/></svg>
<svg style="left:800px;top:572px" width="10.500" height="6.750" viewBox="0 0 14 9"><use href="#eyeP"/><circle cx="7" cy="4.500" r="2.500" fill="#535353"/></svg>
<svg style="left:800px;top:599px" width="10.500" height="6.750" viewBox="0 0 14 9"><use href="#eyeP"/><circle cx="7" cy="4.500" r="2.500" fill="#535353"/></svg>
<!-- row 1 -->
<div class="a" style="left:823px;top:542px;width:13px;height:10px;background:linear-gradient(to right,#3a3a3a,#e8e8e8);border:1px solid #d0d0d0"></div>
<svg style="left:842px;top:540px" width="7" height="14" viewBox="0 0 7 14"><path id="chain" d="M1.500 5.500 L1.500 3 C1.500 0.600 5.500 0.600 5.500 3 L5.500 5.500 M1.500 8.500 L1.500 11 C1.500 13.400 5.500 13.400 5.500 11 L5.500 8.500 M3.500 4.500 L3.500 9.500" fill="none" stroke="#e0e0e0" stroke-width="1.200"/></svg>
<div class="a" style="left:852px;top:539px;width:22px;height:16px;background:#fff"></div>
<div class="t" style="transform:scaleX(0.823);left:879.9px;top:542px;font-size:8.500px;color:#ececec">Gradient Map 1</div>
<!-- row 2 -->
<svg style="left:823px;top:571px" width="13" height="10" viewBox="0 0 13 10"><path d="M0 10 L0 5 L1 2 L2 6 L3 1 L4 5 L5 3 L6 0 L7 4 L8 2 L9 5 L10 1 L11 5 L12 3 L13 6 L13 10Z" fill="#e6e6e6"/></svg>
<svg style="left:842px;top:568px" width="7" height="14" viewBox="0 0 7 14"><use href="#chain"/></svg>
<div class="a" style="left:850px;top:565px;width:26px;height:21px;border:1px solid #e6e6e6"></div>
<div class="a" style="left:856px;top:565px;width:14px;height:21px;background:#6a6a6a"></div>
<div class="a" style="left:850px;top:571px;width:26px;height:9px;background:#6a6a6a"></div>
<div class="a" style="left:852px;top:567px;width:22px;height:17px;background:#fff;border:1px solid #2a2a2a"></div>
<div class="t" style="transform:scaleX(0.780);left:879.9px;top:570px;font-size:8.500px;color:#f4f4f4">Levels 1</div>
<!-- row 3 -->
<svg style="left:818px;top:593px" width="23" height="18" viewBox="0 0 23 18"><rect width="23" height="18" fill="#3b4d1a"/><circle cx="3" cy="4" r="1.700" fill="#7d8a2c"/><circle cx="7" cy="8" r="1.600" fill="#8c952f"/><circle cx="3.500" cy="12.500" r="1.700" fill="#6f7f28"/><circle cx="8" cy="14.500" r="1.400" fill="#28401a"/><circle cx="6.500" cy="2.500" r="1.200" fill="#2a4216"/><circle cx="10" cy="4.500" r="1.300" fill="#7a8428"/><circle cx="10.500" cy="11" r="1.200" fill="#55681f"/><path d="M13 0 L23 0 L23 18 L15 18 C11.500 12 11 5 13 0Z" fill="#46a9ac"/><path d="M12.200 0 L14 0 C12.300 5 12.800 12 16 18 L14 18 C10.800 12 10.300 5 12.200 0Z" fill="#d5e2d2"/><path d="M17 0 L23 0 L23 18 L20 18 C16.500 12 16 5 17 0Z" fill="#3492a0" opacity=".7"/><rect x=".5" y=".5" width="22" height="17" fill="none" stroke="#2c2c2c" stroke-width="1"/></svg>
<div class="t" style="transform:scaleX(0.846);left:847.1px;top:597px;font-size:8.500px;color:#ececec;font-style:italic">Background</div>
<svg style="left:965px;top:597px" width="8" height="10" viewBox="0 0 8 10"><path d="M2 4.500 L2 2.800 C2 0.500 6 0.500 6 2.800 L6 4.500" fill="none" stroke="#dcdcdc" stroke-width="1.100"/><rect x="0.600" y="4.500" width="6.800" height="5" fill="none" stroke="#dcdcdc" stroke-width="1.100"/><rect x="3.500" y="6" width="1" height="2" fill="#dcdcdc"/></svg>

<!-- ===== TOOLTIP ===== -->
<div class="a" id="tip" style="left:258px;top:426px;width:512px;height:149.500px;background:#fff;border-radius:10px;box-shadow:0 3px 16px rgba(0,0,0,.38)"></div>
<div class="a tp" style="left:356.800px;top:467px;letter-spacing:-.57px">Press</div>
<div class="a tp" style="left:417.200px;top:467px;letter-spacing:-.33px;font-weight:bold">CTRL + L</div>
<div class="a tp" style="left:517.300px;top:467px;letter-spacing:.34px">to open Levels.</div>
<div class="a tp" style="left:397.900px;top:495px;letter-spacing:.55px">This will help us adjust</div>
<div class="a tp" style="left:427.700px;top:521.400px;letter-spacing:.83px">document colors</div>


</body>
</html>
